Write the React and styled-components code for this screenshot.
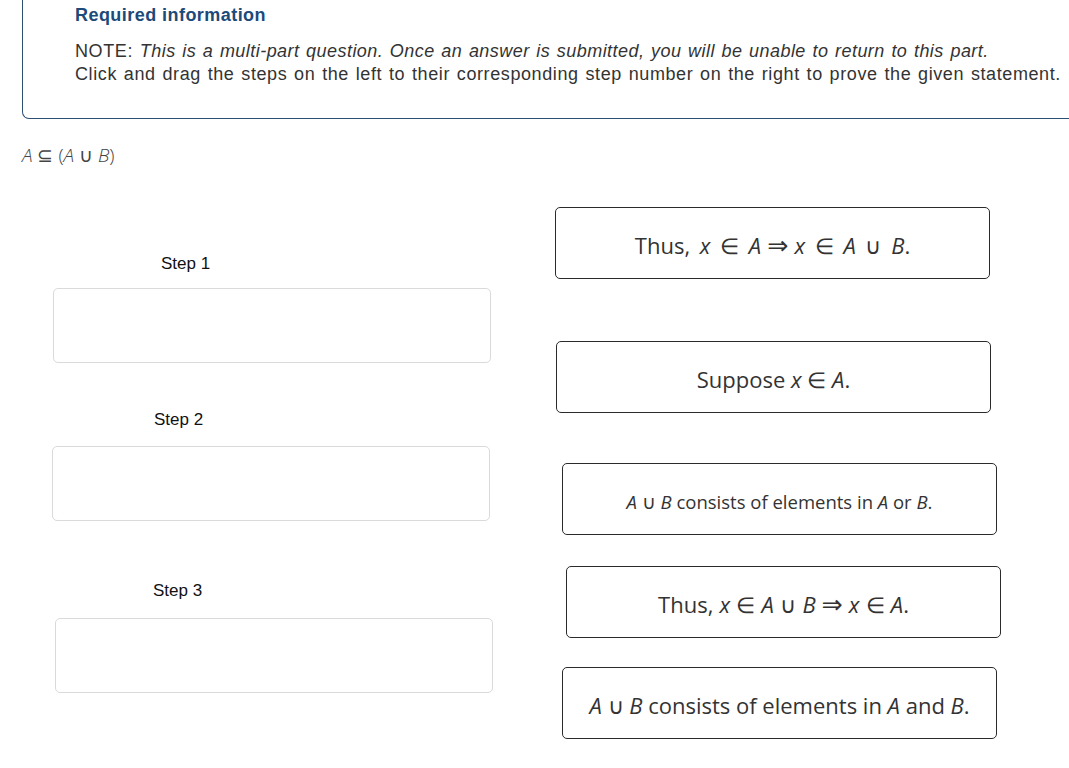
import React from 'react';
import styled, { createGlobalStyle } from 'styled-components';

const GlobalStyle = createGlobalStyle`
  html, body {
    margin: 0;
    padding: 0;
    background: #fff;
    overflow: hidden;
  }
  body {
    font-family: "Liberation Sans", Arial, sans-serif;
    color: #333;
  }
`;

const steps = [
  { label: 'Step 1', top: 47, indent: 108, boxShift: 53, gap: 14 },
  { label: 'Step 2', top: 47, indent: 101, boxShift: 52, gap: 16 },
  { label: 'Step 3', top: 60, indent: 100, boxShift: 55, gap: 17 },
];

const Arrow = () => <Op $wide>⇒</Op>;

const choices = [
  { key: 'c1', top: 0, shift: 0, size: 22, space: 4, content: <>Thus, <i>x</i> ∈ <i>A</i><Arrow /><i>x</i> ∈ <i>A</i> ∪ <i>B</i>.</> },
  { key: 'c2', top: 62, shift: 1, size: 22, space: 0, content: <>Suppose <i>x</i> ∈ <i>A</i>.</> },
  { key: 'c3', top: 50, shift: 7, size: 18.5, space: 0, content: <><i>A</i> ∪ <i>B</i> consists of elements in <i>A</i> or <i>B</i>.</> },
  { key: 'c4', top: 31, shift: 11, size: 22, space: 0.5, content: <>Thus, <i>x</i> ∈ <i>A</i> ∪ <i>B</i><Arrow /><i>x</i> ∈ <i>A</i>.</> },
  { key: 'c5', top: 29, shift: 7, size: 22, space: 0, content: <><i>A</i> ∪ <i>B</i> consists of elements in <i>A</i> and <i>B</i>.</> },
];

export default function App() {
  return (
    <>
      <GlobalStyle />
      <Page>
        <InfoBox>
          <InfoTitle>Required information</InfoTitle>
          <InfoText>
            NOTE: <em>This is a multi-part question. Once an answer is submitted, you will be unable to return to this part.</em>
            <br />
            Click and drag the steps on the left to their corresponding step number on the right to prove the given statement.
          </InfoText>
        </InfoBox>

        <Statement>
          <i>A</i> ⊆ (<i>A</i> ∪ <i>B</i>)
        </Statement>

        <Board>
          <StepColumn>
            {steps.map((s) => (
              <StepGroup key={s.label} $top={s.top}>
                <StepLabel $indent={s.indent}>{s.label}</StepLabel>
                <DropZone $shift={s.boxShift} $gap={s.gap} />
              </StepGroup>
            ))}
          </StepColumn>

          <ChoiceColumn>
            {choices.map((c) => (
              <ChoiceCard key={c.key} $top={c.top} $shift={c.shift} $size={c.size} $space={c.space}>
                <span>{c.content}</span>
              </ChoiceCard>
            ))}
          </ChoiceColumn>
        </Board>
      </Page>
    </>
  );
}

const Page = styled.div`
  width: 1069px;
  height: 768px;
  overflow: hidden;
`;

const InfoBox = styled.div`
  margin-left: 22px;
  width: 1100px;
  height: 119px;
  box-sizing: border-box;
  border-left: 1px solid #2d4f73;
  border-bottom: 1px solid #2d4f73;
  border-bottom-left-radius: 7px;
  padding: 4px 0 0 52px;
`;

const InfoTitle = styled.div`
  font-size: 18px;
  font-weight: 700;
  color: #1c4a7a;
  line-height: 23px;
  letter-spacing: 0.45px;
`;

const InfoText = styled.div`
  margin-top: 13px;
  font-size: 18px;
  line-height: 23px;
  color: #333;
  letter-spacing: 0.6px;
  word-spacing: 1.2px;

  em {
    font-style: italic;
    letter-spacing: 0.45px;
  }
`;

const Statement = styled.div`
  margin: 24px 0 0 22px;
  font-family: "Open Sans", "DejaVu Sans", sans-serif;
  font-size: 19px;
  line-height: 24px;
  color: #444;
  font-weight: 300;

  i {
    font-style: italic;
  }
`;

const Board = styled.div`
  margin-top: 40px;
  display: grid;
  grid-template-columns: 555px 1fr;
`;

const StepColumn = styled.div`
  display: flex;
  flex-direction: column;
`;

const StepGroup = styled.div`
  margin-top: ${({ $top }) => $top}px;
  display: flex;
  flex-direction: column;
`;

const StepLabel = styled.div`
  padding-left: ${({ $indent }) => $indent + 53}px;
  font-size: 17px;
  line-height: 20px;
  color: #111;
`;

const DropZone = styled.div`
  margin-top: ${({ $gap }) => $gap}px;
  margin-left: ${({ $shift }) => $shift}px;
  width: 438px;
  height: 75px;
  box-sizing: border-box;
  border: 1px solid #dadada;
  border-radius: 5px;
  background: #fff;
`;

const ChoiceColumn = styled.div`
  display: flex;
  flex-direction: column;
`;

const ChoiceCard = styled.div`
  margin-top: ${({ $top }) => $top}px;
  margin-left: ${({ $shift }) => $shift}px;
  width: 435px;
  height: 72px;
  box-sizing: border-box;
  border: 1px solid #2b2b2b;
  border-radius: 5px;
  display: flex;
  align-items: center;
  justify-content: center;
  padding-top: 4px;
  font-family: "Open Sans", sans-serif;
  font-size: ${({ $size }) => $size}px;
  word-spacing: ${({ $space }) => $space}px;
  color: #333;

  i {
    font-style: italic;
  }
`;

const Op = styled.span`
  display: inline-block;
  margin: 0 ${({ $wide }) => ($wide ? 6 : 2)}px;
  font-family: "DejaVu Sans", sans-serif;
  font-size: 1.15em;
  line-height: 1;
`;
